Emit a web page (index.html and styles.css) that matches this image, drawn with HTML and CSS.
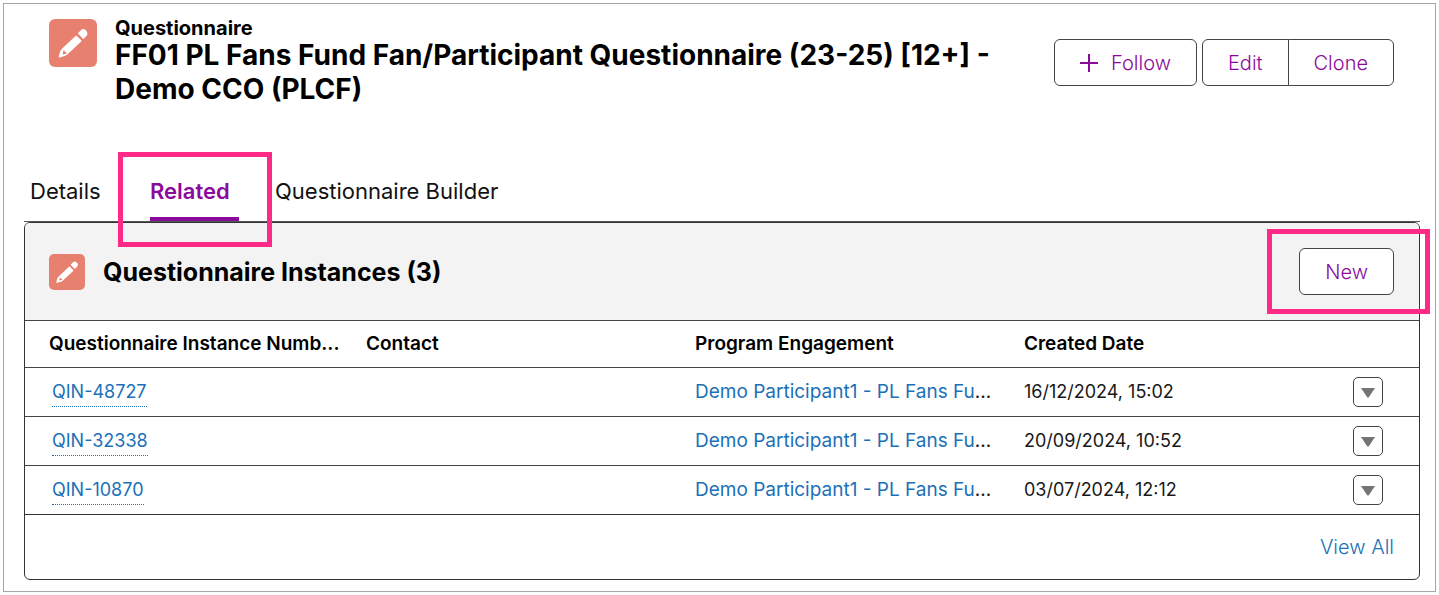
FILE: index.html
```html
<!DOCTYPE html>
<html lang="en">
<head>
<meta charset="utf-8">
<meta name="viewport" content="width=device-width, initial-scale=1">
<title>Questionnaire</title>
<link rel="stylesheet" href="styles.css">
</head>
<body>
<svg class="defs" aria-hidden="true">
  <symbol id="pencil" viewBox="0 0 48 48">
    <path d="M29.4 13.7 31.6 11.4Q34.2 8.7 37 11.4Q39.7 14.3 37.4 17L35 19.4Q34.3 20 33.6 19.4L29.4 15.1Q28.7 14.4 29.4 13.7Z"/>
    <path fill-rule="evenodd" d="M26.5 16.9Q27.2 16.2 27.9 16.9L32.2 21.2Q32.9 21.9 32.2 22.6L18.6 35.2Q17 36.6 14.8 37.2L10.8 38.4Q9.4 38.7 9.8 37.2L11 32.9Q11.7 30.8 13.2 29.5ZM14.6 31.2 13.5 35.4 18 34.4Z"/>
  </symbol>
</svg>
<main class="frame">
  <header class="page-header">
    <span class="record-icon"><svg aria-hidden="true"><use href="#pencil"/></svg></span>
    <div class="title">
      <p class="eyebrow">Questionnaire</p>
      <h1>FF01 PL Fans Fund Fan/Participant Questionnaire (23-25) [12+] - Demo CCO (PLCF)</h1>
    </div>
    <div class="actions">
      <button class="button follow" type="button"><svg viewBox="0 0 18 18" aria-hidden="true"><path d="M9 0V18M0 9H18"/></svg>Follow</button>
      <div class="button-group">
        <button class="button" type="button">Edit</button>
        <button class="button" type="button">Clone</button>
      </div>
    </div>
  </header>
  <nav class="tabs">
    <a class="tab" href="#details">Details</a>
    <a class="tab active" href="#related" aria-current="page">Related</a>
    <a class="tab" href="#builder">Questionnaire Builder</a>
  </nav>
  <section class="card">
    <div class="card-header">
      <span class="record-icon small"><svg aria-hidden="true"><use href="#pencil"/></svg></span>
      <h2>Questionnaire Instances (3)</h2>
      <div class="new-action"><button class="button" type="button">New</button></div>
    </div>
    <table>
      <thead>
        <tr><th scope="col">Questionnaire Instance Numb...</th><th scope="col">Contact</th><th scope="col">Program Engagement</th><th scope="col">Created Date</th><td class="menu-cell"></td></tr>
      </thead>
      <tbody>
        <tr><td><a class="record" href="#48727">QIN-48727</a></td><td></td><td class="engagement"><a href="#p1">Demo Participant1 - PL Fans Fu</a>...</td><td>16/12/2024, 15:02</td><td class="menu-cell"><button class="menu" type="button" aria-label="Show actions"><svg viewBox="0 0 14 10" aria-hidden="true"><path d="M0 0H14L8 9Q7 10 6 9Z"/></svg></button></td></tr>
        <tr><td><a class="record" href="#32338">QIN-32338</a></td><td></td><td class="engagement"><a href="#p2">Demo Participant1 - PL Fans Fu</a>...</td><td>20/09/2024, 10:52</td><td class="menu-cell"><button class="menu" type="button" aria-label="Show actions"><svg viewBox="0 0 14 10" aria-hidden="true"><path d="M0 0H14L8 9Q7 10 6 9Z"/></svg></button></td></tr>
        <tr><td><a class="record" href="#10870">QIN-10870</a></td><td></td><td class="engagement"><a href="#p3">Demo Participant1 - PL Fans Fu</a>...</td><td>03/07/2024, 12:12</td><td class="menu-cell"><button class="menu" type="button" aria-label="Show actions"><svg viewBox="0 0 14 10" aria-hidden="true"><path d="M0 0H14L8 9Q7 10 6 9Z"/></svg></button></td></tr>
      </tbody>
    </table>
    <footer class="card-footer"><a href="#all">View All</a></footer>
  </section>
</main>
</body>
</html>
```
FILE: styles.css
```css
* { box-sizing: border-box; }
body {
  margin: 0;
  padding: 3px;
  background: #fff;
  color: #181818;
  font: 18px/24px Inter, "Liberation Sans", sans-serif;
}
h1, h2, p { margin: 0; color: #000; }
a { color: #1b70b8; text-decoration: none; }
.defs { position: absolute; width: 0; height: 0; }
.frame {
  border: 1px solid #a6a6a6;
  padding: 11px 15px 11px 20px;
}
.page-header {
  display: flex;
  align-items: flex-start;
  gap: 18px;
  padding: 0 26px 0 25px;
  min-height: 140px;
}
.record-icon {
  flex: none;
  width: 48px;
  height: 48px;
  margin-top: 4px;
  border-radius: 6px;
  background: #e7806f;
}
.record-icon svg { display: block; width: 100%; height: 100%; fill: #fff; }
.record-icon.small { width: 36px; height: 36px; margin-top: 0; border-radius: 5px; }
.title { flex: 1; padding-top: 3px; }
.eyebrow { font-size: 20px; line-height: 20px; font-weight: 700; }
h1 { font-size: 28px; line-height: 34px; font-weight: 700; }
.actions { display: flex; gap: 5px; margin-top: 24px; }
.button {
  height: 47px;
  padding: 0 25px;
  border: 1px solid #444;
  border-radius: 6px;
  background: #fff;
  color: #8a0a9c;
  font: 300 20px/24px Inter, "Liberation Sans", sans-serif;
}
.follow { display: flex; align-items: center; gap: 13px; }
.follow svg { width: 18px; height: 18px; stroke: currentColor; stroke-width: 2; }
.button-group { display: flex; }
.button-group .button:first-child { border-radius: 6px 0 0 6px; }
.button-group .button:last-child { border-radius: 0 6px 6px 0; margin-left: -1px; }
.tabs {
  display: flex;
  gap: 36px;
  height: 67px;
  padding-left: 6px;
  border-bottom: 1px solid #555;
}
.tab {
  position: relative;
  min-width: 84px;
  padding: 24px 0 18px;
  color: #111;
  font-size: 22px;
}
.tab.active {
  min-width: 89px;
  color: #8a0a9c;
  font-weight: 600;
  border-bottom: 4px solid #8a0a9c;
}
.tab.active::after, .new-action::after {
  content: "";
  position: absolute;
  z-index: 1;
  border: 5px solid #ff2a85;
  pointer-events: none;
}
.tab.active::after { inset: -3px -33px -30px -32px; }
.new-action { position: relative; margin-left: auto; }
.new-action::after { inset: -19px -36px -19px -32px; }
.card { border: 1px solid #333; border-radius: 6px; }
.card-header {
  display: flex;
  align-items: center;
  gap: 18px;
  height: 97px;
  padding: 0 25px 0 24px;
  border-radius: 5px 5px 0 0;
  background: #f3f3f3;
}
.new-action .button { display: block; }
h2 { font-size: 25px; line-height: 32px; font-weight: 700; }
table { width: 100%; table-layout: fixed; border-collapse: collapse; }
th, td {
  height: 49px;
  padding: 0 12px;
  border-top: 1px solid #444;
  overflow: hidden;
  text-align: left;
  white-space: nowrap;
}
thead th, thead td { height: 47px; }
th { color: #000; font-size: 19px; font-weight: 600; }
th:first-child { padding-left: 24px; }
td:first-child { padding-left: 27px; }
.engagement { font-size: 19px; }
.record {
  display: inline-block;
  line-height: 29px;
  border-bottom: 1px dotted #1b70b8;
}
.menu-cell { width: 78px; }
.menu {
  display: flex;
  align-items: center;
  justify-content: center;
  width: 30px;
  height: 30px;
  padding: 2px 0 0;
  border: 1px solid #444;
  border-radius: 5px;
  background: #fff;
}
.menu svg { width: 14px; height: 10px; fill: #747474; }
.card-footer {
  margin-top: -1px;
  padding: 20px 25px;
  border-top: 1px solid #333;
  text-align: right;
  font-size: 20px;
  font-weight: 300;
}
```
